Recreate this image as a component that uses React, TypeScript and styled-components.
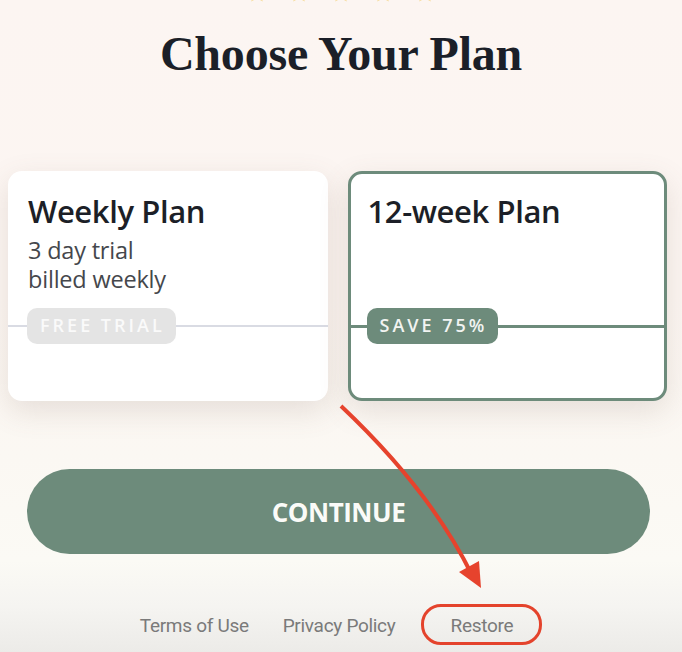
import React from 'react'
import styled, { createGlobalStyle } from 'styled-components'

const GlobalStyle = createGlobalStyle`
    * { box-sizing: border-box; }
    html, body { margin: 0; padding: 0; }
    body {
        font-family: 'Open Sans', 'Noto Sans', sans-serif;
        background: #fcf5f1;
    }
`

const Page = styled.div`
    position: relative;
    width: 682px;
    height: 652px;
    overflow: hidden;
    background: linear-gradient(to bottom, #fcf5f2 0%, #fcf6f2 45%, #fbf8f3 70%, #fbfaf5 86%, #f5f4f1 93%, #ecebe8 100%);
`

const StarRow = styled.div`
    height: 4px;
    overflow: hidden;
    display: flex;
    justify-content: center;
    align-items: flex-end;
    gap: 20px;
`

const Title = styled.h1`
    margin: 22px 0 0;
    text-align: center;
    font-family: 'Liberation Serif', 'DejaVu Serif', serif;
    font-weight: 700;
    font-size: 48px;
    line-height: 56px;
    color: #1b1f28;
    letter-spacing: -0.2px;
`

const Cards = styled.div`
    margin-top: 89px;
    padding: 0 15px 0 8px;
    display: grid;
    grid-template-columns: 1fr 1fr;
    gap: 20px;
`

const Card = styled.div<{ $selected?: boolean }>`
    height: 230px;
    background: #fff;
    border-radius: 14px;
    border: ${p => (p.$selected ? '3px solid #6d8b7b' : '0')};
    padding-top: ${p => (p.$selected ? '19px' : '22px')};
    box-shadow: 0 10px 30px rgba(120, 95, 80, 0.16);
    display: flex;
    flex-direction: column;
`

const Info = styled.div<{ $selected?: boolean }>`
    min-height: 115px;
    padding: 0 ${p => (p.$selected ? '17px' : '20px')};
`

const PlanName = styled.div`
    font-weight: 600;
    font-size: 31px;
    line-height: 36px;
    color: #1c1f27;
    letter-spacing: -0.4px;
`

const PlanText = styled.div`
    margin-top: 7px;
    font-size: 23.5px;
    line-height: 29px;
    color: #45474c;
    letter-spacing: -0.2px;
`

const BadgeLine = styled.div<{ $selected?: boolean }>`
    display: flex;
    padding-left: ${p => (p.$selected ? '16px' : '19px')};
    background: linear-gradient(
        to bottom,
        transparent calc(50% - 1px),
        ${p => (p.$selected ? '#6d8b7b' : '#d9dbe3')} calc(50% - 1px),
        ${p => (p.$selected ? '#6d8b7b' : '#d9dbe3')} calc(50% + ${p => (p.$selected ? '2px' : '1px')}),
        transparent calc(50% + ${p => (p.$selected ? '2px' : '1px')})
    );
`

const Badge = styled.span<{ $selected?: boolean }>`
    height: 36px;
    display: inline-flex;
    align-items: center;
    padding: 0 11px 2px 13px;
    border-radius: 10px;
    background: ${p => (p.$selected ? '#6d8b7b' : '#e4e4e4')};
    color: ${p => (p.$selected ? '#f2f4f2' : '#fafafa')};
    font-size: 18px;
    font-weight: 600;
    letter-spacing: 3px;
`

const ContinueButton = styled.button`
    display: block;
    margin: 68px 32px 0 27px;
    width: 623px;
    height: 85px;
    border: none;
    border-radius: 43px;
    background: #6d8b7b;
    color: #fbfbf8;
    font-family: 'Open Sans', 'Noto Sans', sans-serif;
    font-weight: 700;
    font-size: 26px;
    letter-spacing: -0.5px;
    cursor: pointer;
`

const Footer = styled.nav`
    margin-top: 50px;
    display: flex;
    justify-content: center;
    align-items: flex-start;
    gap: 26px;
`

const FooterLink = styled.a<{ $circled?: boolean }>`
    font-family: 'Roboto', 'Liberation Sans', sans-serif;
    font-size: 19px;
    line-height: 24px;
    color: #7a7a7a;
    text-decoration: none;
    letter-spacing: -0.3px;
    height: 41px;
    padding: ${p => (p.$circled ? '7px 26px 4px' : '10px 0 0')};
    border: ${p => (p.$circled ? '3px solid #e4432c' : 'none')};
    border-radius: 20px;

    &:first-child {
        margin-right: 8px;
    }
`

const Annotation = styled.svg`
    position: absolute;
    left: 0;
    top: 0;
    pointer-events: none;
`

const Star = () => (
    <svg width="22" height="22" viewBox="0 0 24 24">
        <path d="M12 2l3 6.6 7.2.8-5.4 4.9 1.5 7.1L12 17.8 5.7 21.4l1.5-7.1L1.8 9.4 9 8.6z" fill="#f6dc9c" />
    </svg>
)

const App: React.FC = () => {
    const stars = [0, 1, 2, 3, 4]

    return <Page>
        <GlobalStyle />
        <StarRow>
            {stars.map(i => <Star key={i} />)}
        </StarRow>

        <Title>Choose Your Plan</Title>

        <Cards>
            <Card>
                <Info>
                    <PlanName>Weekly Plan</PlanName>
                    <PlanText>3 day trial<br />billed weekly</PlanText>
                </Info>
                <BadgeLine>
                    <Badge>FREE TRIAL</Badge>
                </BadgeLine>
            </Card>
            <Card $selected>
                <Info $selected>
                    <PlanName>12-week Plan</PlanName>
                </Info>
                <BadgeLine $selected>
                    <Badge $selected>SAVE 75%</Badge>
                </BadgeLine>
            </Card>
        </Cards>

        <ContinueButton>CONTINUE</ContinueButton>

        <Footer>
            <FooterLink href="#">Terms of Use</FooterLink>
            <FooterLink href="#">Privacy Policy</FooterLink>
            <FooterLink href="#" $circled>Restore</FooterLink>
        </Footer>

        <Annotation width="682" height="652" viewBox="0 0 682 652">
            <path d="M341 406 Q 430 490 472 575" fill="none" stroke="#e6432d" strokeWidth="4" />
            <polygon points="481,588 459,572 479,561" fill="#e6432d" />
        </Annotation>
    </Page>
}

export default App
